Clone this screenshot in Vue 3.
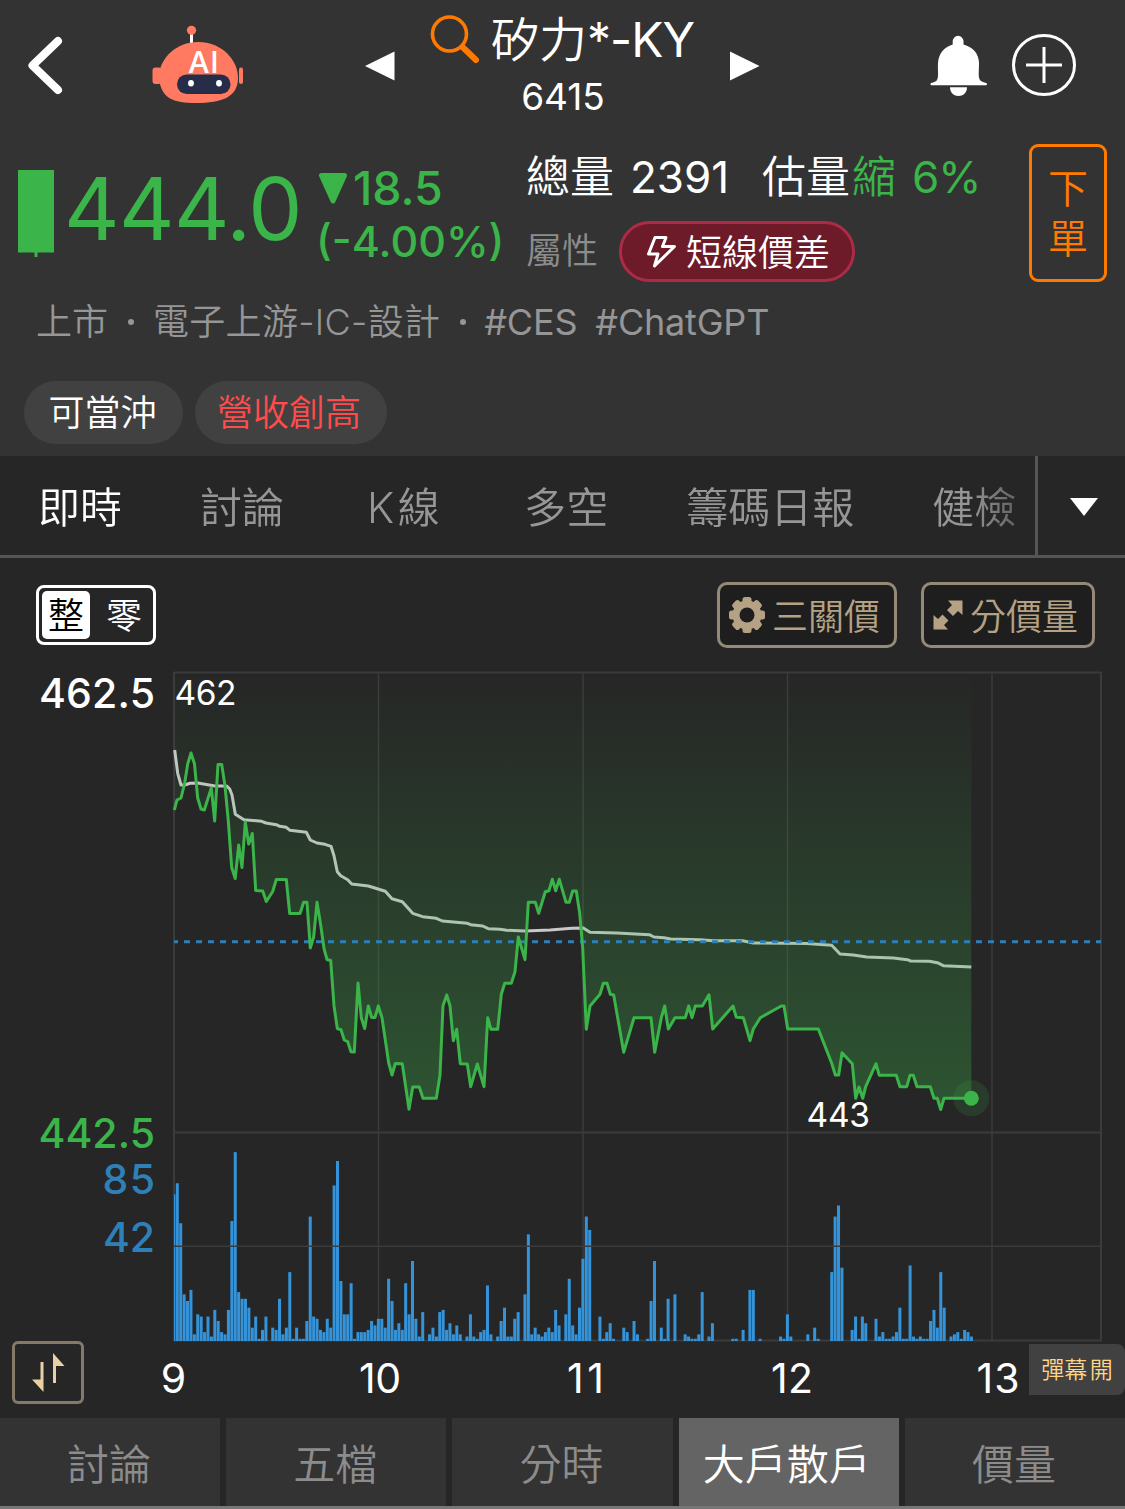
<script setup>
import { ref, computed } from 'vue'

const info = ['上市', '電子上游-IC-設計', '#CES', '#ChatGPT']
const tabs = ['即時', '討論', 'K線', '多空', '籌碼日報', '健檢']
const bottomTabs = ['討論', '五檔', '分時', '大戶散戶', '價量']
const activeTab = ref('即時')
const activeBottom = ref('大戶散戶')
const lot = ref('整')

// chart geometry
const left = 174
const top = 672.5
const base = 1341
const minute = 204.5 / 60
const unit = 2.222
const hours = [
  { label: '9', x: 173.5, w: 23 },
  { label: '10', x: 380, w: 42 },
  { label: '11', x: 585.5, w: 37 },
  { label: '12', x: 792, w: 42 },
  { label: '13', x: 998, w: 43 }
]

// one entry per minute from 09:00
const volumes = [
  66, 71, 53, 21, 18, 23, 3, 12, 11, 4, 11, 2, 14, 9, 4, 3, 14, 54, 85, 22,
  19, 19, 15, 6, 11, 1, 5, 11, 0, 6, 5, 19, 3, 6, 31, 1, 6, 1, 1, 9,
  56, 11, 10, 5, 4, 10, 6, 70, 81, 27, 12, 12, 26, 1, 4, 4, 4, 5, 9, 7,
  10, 10, 6, 28, 18, 5, 8, 5, 26, 12, 36, 10, 2, 13, 0, 3, 6, 2, 13, 14,
  5, 8, 3, 7, 3, 0, 2, 12, 2, 1, 4, 5, 25, 3, 0, 2, 9, 15, 2, 2,
  10, 13, 0, 21, 48, 3, 6, 3, 2, 4, 6, 4, 14, 7, 0, 12, 28, 7, 3, 15,
  37, 56, 50, 0, 0, 11, 1, 4, 8, 1, 0, 0, 6, 4, 0, 9, 3, 0, 0, 1,
  18, 36, 0, 6, 1, 19, 0, 21, 0, 0, 3, 2, 1, 1, 3, 22, 0, 2, 8, 0,
  0, 0, 0, 0, 1, 1, 0, 5, 0, 23, 23, 0, 1, 0, 0, 0, 0, 0, 2, 1,
  12, 2, 0, 0, 0, 0, 3, 0, 6, 1, 0, 0, 0, 31, 56, 61, 33, 0, 0, 5,
  11, 1, 11, 8, 0, 0, 10, 2, 4, 1, 1, 2, 4, 15, 1, 1, 34, 2, 1, 2,
  1, 1, 9, 14, 6, 31, 15, 0, 2, 3, 4, 1, 5, 4, 2
]

const price =
  '174.3,810 177,800 181,798 184.7,783 187.7,764 191,753 194.5,764 197.7,798 201,809 204.3,810 211.3,788 214.7,821 218,764.5 221.7,764.5 225,786 228.3,821 231.7,867.5 235.2,878.5 238.7,845 242,867.5 245.3,822 248.7,844 252.3,833.5 255.7,890.5 262.7,891 266.3,901.5 272.7,891.5 276.3,879.5 286.3,879.5 289.7,913.5 300,913.5 303.7,902.3 307,902.3 310.3,948 313.7,936.7 317,902.3 320.7,925 324,948.5 327,959.5 330.7,960.5 334,1005.7 337.3,1028.5 341,1029.7 344.3,1040 347.7,1041.7 351,1051.7 354.3,1052 358,983 361.3,1017.7 364.7,1028.5 368.3,1006 371.7,1017.5 375,1017.5 378.3,1006 382,1017.7 385.3,1040 388.7,1063 392,1075 395.3,1063.5 402.3,1063.7 409,1109.3 412.7,1087 419.3,1087 423,1098.3 436.3,1098.3 440,1075 443,1005.7 446.7,995 450,1005.7 453.3,1040.7 456.7,1029.3 460.3,1063.7 467.3,1064 470.7,1086.7 477.3,1064 484,1086.7 487.7,1017.7 491,1029.3 497.7,1029.3 501.3,994.3 504.7,983.3 511.3,983.3 515,971.7 518.3,937 525,959.7 528.3,902.3 535.3,902.3 538.7,913.3 545.3,891.7 549,890.7 552.3,879.3 555.7,890.7 559.3,879.3 566,902.3 569.3,902.3 572.7,891 576.3,891 579.7,913.3 582.7,948 586.3,1029.3 590,1006 600,994.3 603.3,983.3 607,983.3 610.3,994.3 613.7,995 623.7,1052.3 634,1017.7 651,1017.7 654.7,1052.3 661.3,1017.7 664.7,1006 668.3,1029 675,1017.7 685.3,1017.7 688.7,1006 692,1017.7 695.3,1006 702.3,1006 709,994.7 712.7,1029 733,1006 736.3,1017.3 743.3,1017.7 750,1040.7 753.3,1029 760.3,1017.7 781.3,1006 784,1006 787.7,1029 818.3,1029 831.7,1063.3 835.3,1075 838.7,1075 842,1052.7 852.3,1063.7 855.7,1098.3 859,1087 862.7,1098.3 865.7,1086.7 876,1063.7 879.3,1075.3 896.3,1075.3 900,1086.7 906.7,1086.7 910,1075.3 913.3,1075.3 917,1086.7 930.3,1086.7 934,1098.3 937.3,1098.3 940.7,1109.5 944,1098.3 971.3,1098.3'
const average =
  '174.7,750 177.7,773.3 181,785 184.7,785 190,783.3 197.7,783 215,786 226.7,786 229.7,789 232,795 235.3,814.3 244,819.7 261.7,821.3 266,823 276.3,824.7 279.7,826.3 286.3,827.3 290,830.3 306.3,832.3 310.3,840 317,843 325,844.3 331,846.3 334,855.7 337.3,871.7 340.7,875.7 347.7,879.7 351.7,884 368.3,886 385.3,891.3 392,898.7 402.3,901.7 412.7,913.3 422.7,916.7 436.3,918.3 442.3,921 467.3,923.3 470.7,924.7 482.7,926 488.3,928.7 500,929.3 506.7,930.3 525,931 550,930 571.7,928.3 583.3,928 590,932.3 616.7,933 649.3,934.7 654,937 664,937.7 670.7,939 700,939.7 713.3,940.7 742.7,940.7 753.3,943 806.7,943.5 831.7,945.3 840,954 853.3,955 866.7,957 893.3,958 907.3,959.7 910.7,961 929.3,961.3 937.3,962.7 943.3,965.7 971.3,967'

const area = computed(() => `${left},${top} ${price} 971.3,${top}`)
const bars = computed(() =>
  volumes
    .map((v, i) => {
      const start = Math.max(left, left + i * minute - 1.6)
      return { x: start, w: left + i * minute + 1.4 - start, h: v * unit }
    })
    .filter((bar) => bar.h > 0)
)
</script>

<template>
  <div class="app">
    <header class="header">
      <svg class="back" viewBox="24 35 40 60" width="40" height="60">
        <path d="M57 41 31.500 65.500 57 90" fill="none" stroke="#fff" stroke-width="8" stroke-linecap="round" stroke-linejoin="round" />
      </svg>
      <svg class="robot" viewBox="150 22 96 86" width="96" height="86">
        <path d="M191.500 34V45" stroke="#fff" stroke-width="3" />
        <circle cx="191.500" cy="30.300" r="4.600" fill="#ff7a60" />
        <rect x="152.500" y="67.500" width="9" height="16.500" rx="3" fill="#ff7a60" />
        <rect x="239" y="67.500" width="4" height="16.500" rx="2" fill="#ff7a60" />
        <path d="M198 42C222 42 238 60 238 78C238 97 222 103 196 103C174 103 159 99 159 74C161 58 176 42 198 42Z" fill="#ff7a60" />
        <rect x="177" y="74.500" width="53.500" height="19.500" rx="9.750" fill="#262d48" />
        <ellipse cx="191" cy="83.300" rx="2.900" ry="3.300" fill="#fff" />
        <ellipse cx="219" cy="83.300" rx="2.900" ry="3.300" fill="#fff" />
        <text x="203.500" y="73" class="robot-label">AI</text>
      </svg>
      <svg class="prev" viewBox="0 0 30 30" width="30" height="30"><path d="M0 15 29.500 0.500V29.500Z" fill="#fff" /></svg>
      <div class="title">
        <div class="name">
          <svg viewBox="429 12 52 52" width="52" height="52">
            <circle cx="449.500" cy="34" r="17" fill="none" stroke="#ff7a00" stroke-width="3.600" />
            <path d="M463 47.500 476 60" stroke="#ff7a00" stroke-width="6" stroke-linecap="round" />
          </svg>
          <span>矽力<b>*-KY</b></span>
        </div>
        <div class="code">6415</div>
      </div>
      <svg class="next" viewBox="0 0 30 30" width="30" height="30"><path d="M0 0.500 29.500 15 0 29.500Z" fill="#fff" /></svg>
      <svg class="bell" viewBox="929 34 60 64" width="60" height="64">
        <path d="M952.700 42a5.400 6.200 0 0 1 10.800 0v2.500C973 47 979 54 979 63C979 72 978 77 980 80C982 83 987 82 987 84.300Q987 85.200 986 85.200H931.500Q930.500 85.200 930.500 84.300C930.500 82 935.500 83 937 80C939 76 937.500 71 938 63C938.500 54 944 47 952.700 44.500Z" fill="#fff" />
        <path d="M950 87.300H967C967 93 963 96 958.500 96C954 96 950 93 950 87.300Z" fill="#fff" />
      </svg>
      <svg class="add" viewBox="1010 32 68 66" width="68" height="66">
        <ellipse cx="1044" cy="65" rx="30.500" ry="29.500" fill="none" stroke="#fff" stroke-width="3" />
        <path d="M1044 47V83M1026 65H1062" stroke="#fff" stroke-width="3" />
      </svg>
    </header>

    <section class="quote">
      <svg class="candle" viewBox="0 0 36 87" width="36" height="87">
        <path d="M0 0H36V82.500H19.500V87H16.500V82.500H0Z" fill="#3bb44a" />
      </svg>
      <div class="price">444.0</div>
      <div class="change">
        <div class="diff">
          <svg viewBox="0 0 32 32" width="32" height="32">
            <path d="M3.500 3.500H26.500L15 29Z" fill="#3bb44a" stroke="#3bb44a" stroke-width="5" stroke-linejoin="round" />
          </svg>
          <span>18.5</span>
        </div>
        <div class="percent">(-4.00%)</div>
      </div>
      <div class="stats">
        <div class="volume">
          <span>總量</span>
          <span class="total">2391</span>
          <span class="estimate">估量</span>
          <span class="shrink">縮</span>
          <span class="rate">6%</span>
        </div>
        <div class="attr">
          <span class="attr-label">屬性</span>
          <span class="pill">
            <svg viewBox="646 234 32 35" width="32" height="35">
              <path d="M655 237.500H666L662.500 246.500H674.500L654.500 266L658 254H648.500Z" fill="none" stroke="#fff" stroke-width="3" stroke-linejoin="round" />
            </svg>
            <span>短線價差</span>
          </span>
        </div>
      </div>
      <button class="order"><span>下</span><span>單</span></button>
    </section>

    <div class="info">
      <span>{{ info[0] }}</span>
      <i></i>
      <span class="industry">{{ info[1] }}</span>
      <i></i>
      <span class="hash">{{ info[2] }}</span>
      <span class="hash topic">{{ info[3] }}</span>
    </div>

    <div class="tags">
      <span class="tag">可當沖</span>
      <span class="tag hot">營收創高</span>
    </div>

    <nav class="tabs">
      <div class="tab-list">
        <a v-for="tab in tabs" :key="tab" :class="{ active: tab === activeTab, k: tab === 'K線' }" @click="activeTab = tab">{{ tab }}</a>
      </div>
      <button class="more">
        <svg viewBox="0 0 28 18" width="28" height="18"><path d="M0 0H28L14 18Z" fill="#fff" /></svg>
      </button>
    </nav>

    <div class="toolbar">
      <div class="toggle">
        <span v-for="name in ['整', '零']" :key="name" :class="{ on: name === lot }" @click="lot = name">{{ name }}</span>
      </div>
      <button class="tool levels">
        <svg viewBox="-18 -18 36 36" width="36" height="36">
          <g fill="#b5a184">
            <rect v-for="n in 4" :key="n" x="-4.500" y="-18" width="9" height="36" rx="2.500" :transform="`rotate(${n * 45})`" />
          </g>
          <circle r="11" fill="none" stroke="#b5a184" stroke-width="7" />
          <circle r="7.500" fill="#1e1e1e" />
        </svg>
        <span>三關價</span>
      </button>
      <button class="tool">
        <svg viewBox="0 0 30 30" width="30" height="30">
          <path d="M15 0.500H29.500V15L25 11L20 16L14 10L19 5ZM0.500 15L5 19L9.500 14.500L15.500 20.500L11 25L15 29.500H0.500Z" fill="#b5a184" />
        </svg>
        <span>分價量</span>
      </button>
    </div>

    <section class="chart">
      <svg viewBox="0 660 1125 758" width="1125" height="758">
        <defs>
          <linearGradient id="fade" gradientUnits="userSpaceOnUse" x1="0" y1="672" x2="0" y2="1110">
            <stop offset="0" stop-color="#3bb44a" stop-opacity="0" />
            <stop offset="1" stop-color="#3bb44a" stop-opacity="0.330" />
          </linearGradient>
        </defs>
        <g class="grid">
          <path d="M378.500 672V1341M583 672V1341M787.500 672V1341M992 672V1341" stroke-width="1.500" />
          <path d="M174 672.500H1102M174 1132.500H1102" stroke-width="1.800" />
          <path d="M174 672V1341M1101 672V1341M174 1340.500H1102" stroke-width="2" />
        </g>
        <polyline :points="average" fill="none" stroke="#c8c8c8" stroke-width="3" stroke-linejoin="round" />
        <polygon :points="area" fill="url(#fade)" />
        <path d="M174 941.700H1101" stroke="#2e80b8" stroke-width="3" stroke-dasharray="6 6" stroke-dashoffset="2" />
        <polyline :points="price" fill="none" stroke="#3bb44a" stroke-width="3" stroke-linejoin="round" />
        <circle cx="971.300" cy="1098.300" r="18" fill="#3bb44a" opacity="0.150" />
        <circle cx="971.300" cy="1098.300" r="7.500" fill="#3bb44a" />
        <g fill="#3594d9">
          <rect v-for="(bar, i) in bars" :key="i" :x="bar.x" :y="base - bar.h" :width="bar.w" :height="bar.h" />
        </g>
        <path class="grid" d="M174 1246.300H1101" stroke-width="1.500" />
        <g class="mark">
          <text x="174.500" y="704.500" textLength="62">462</text>
          <text x="806.500" y="1126.500" textLength="63.500">443</text>
        </g>
        <g class="axis">
          <text x="39" y="708" textLength="116" class="high">462.5</text>
          <text x="38.500" y="1148" textLength="116.500" class="low">442.5</text>
          <text x="102.500" y="1193.500" textLength="52.500">85</text>
          <text x="103" y="1252" textLength="52">42</text>
        </g>
        <text v-for="hour in hours" :key="hour.label" class="hour" :x="hour.x" y="1393" :textLength="hour.w">{{ hour.label }}</text>
      </svg>
      <button class="sort">
        <svg viewBox="30 1352 38 42" width="38" height="42">
          <path d="M54 1383V1353L65.500 1366H57V1383ZM44.500 1362V1392L33 1379.500H41.500V1362Z" fill="#e9cfa4" />
        </svg>
      </button>
      <button class="danmu">彈幕 開</button>
    </section>

    <nav class="bottom">
      <a v-for="tab in bottomTabs" :key="tab" :class="{ active: tab === activeBottom }" @click="activeBottom = tab">{{ tab }}</a>
    </nav>
  </div>
</template>

<style>
body {
  margin: 0;
  background: #262626;
}
</style>

<style scoped>
.app {
  width: 1125px;
  height: 1509px;
  overflow: hidden;
  background: #333;
  color: #fff;
  font-family: Inter, 'Noto Sans CJK TC', sans-serif;
  font-weight: 350;
}
.app * {
  box-sizing: border-box;
}
svg {
  display: block;
  flex: none;
}
button {
  margin: 0;
  padding: 0;
  border: 0;
  background: none;
  color: inherit;
  font: inherit;
}
span,
a {
  white-space: nowrap;
}

.header {
  display: flex;
  align-items: center;
  height: 130px;
}
.back {
  margin-left: 25px;
}
.robot {
  margin-left: 85px;
}
.robot-label {
  fill: #fff;
  font-size: 30.5px;
  font-weight: 500;
  letter-spacing: 0.5px;
  text-anchor: middle;
}
.prev {
  margin: 2px 0 0 119px;
}
.title {
  width: 300px;
  height: 130px;
  margin-left: 18px;
  padding-top: 12px;
}
.name {
  display: flex;
  gap: 10px;
  padding-left: 16px;
  font-size: 48px;
  line-height: 55px;
}
.name b {
  font-weight: 400;
  letter-spacing: -1px;
}
.code {
  margin-top: 8px;
  font-size: 37px;
  font-weight: 400;
  line-height: 44px;
  text-align: center;
}
.next {
  margin: 2px 0 0 17px;
}
.bell {
  margin: 2px 0 0 169px;
}
.add {
  margin-left: 21px;
}

.quote {
  display: flex;
  height: 170px;
}
.candle {
  margin: 40px 0 0 18px;
}
.price {
  width: 252px;
  margin-left: 10px;
  font-size: 86px;
  font-weight: 400;
  line-height: 158px;
  letter-spacing: -0.5px;
  color: #3bb44a;
}
.change {
  width: 210px;
  padding-top: 30px;
  color: #3bb44a;
  font-size: 46.5px;
  font-weight: 500;
}
.diff {
  display: flex;
  gap: 3px;
  height: 56px;
  padding-left: 2px;
  line-height: 56px;
}
.diff svg {
  margin-top: 12px;
}
.percent {
  font-size: 43px;
  line-height: 51px;
}
.stats {
  width: 503px;
  padding-top: 19px;
}
.volume {
  display: flex;
  font-size: 44px;
  line-height: 56px;
}
.total {
  width: 148px;
  padding-left: 16px;
  font-weight: 400;
}
.shrink,
.rate {
  color: #3bb44a;
}
.shrink {
  padding-left: 2px;
}
.rate {
  padding-left: 16px;
  font-weight: 400;
  letter-spacing: -1px;
}
.attr {
  display: flex;
  align-items: center;
  height: 61px;
  margin-top: 16px;
  font-size: 36px;
  line-height: 57px;
}
.attr-label {
  width: 93px;
  color: #8c8c8c;
}
.pill {
  display: flex;
  align-items: center;
  gap: 8px;
  width: 236px;
  height: 61px;
  padding-left: 24px;
  border: 3px solid #ad2b47;
  border-radius: 31px;
  background: #6d1a29;
}
.pill span {
  padding-top: 3px;
}
.order {
  display: flex;
  flex-direction: column;
  align-items: center;
  width: 78px;
  height: 138px;
  margin-top: 14px;
  padding-top: 17px;
  border: 3px solid #ff7a00;
  border-radius: 9px;
  color: #ff7a00;
  font-size: 40px;
  line-height: 50px;
}

.info {
  display: flex;
  align-items: center;
  height: 44px;
  padding-left: 36px;
  font-size: 36px;
  line-height: 44px;
  color: #969696;
}
.info i {
  width: 6px;
  height: 6px;
  margin: 0 19px 0 20px;
  border-radius: 50%;
  background: #969696;
}
.industry {
  letter-spacing: 0.3px;
}
.hash {
  margin-left: -1px;
  font-weight: 400;
  letter-spacing: -0.2px;
}
.topic {
  margin-left: 18px;
}
.tags {
  display: flex;
  gap: 12px;
  height: 112px;
  padding: 37px 24px 0;
}
.tag {
  width: 159px;
  height: 63px;
  padding-right: 2px;
  border-radius: 32px;
  background: #414141;
  font-size: 36px;
  line-height: 65px;
  text-align: center;
}
.hot {
  width: 192px;
  padding-right: 4px;
  color: #ff4b4b;
}

.tabs {
  display: flex;
  height: 102px;
  border-bottom: 3px solid #555;
  background: #262626;
}
.tab-list {
  display: flex;
  gap: 78px;
  width: 1035px;
  padding-left: 38px;
  overflow: hidden;
  color: #969696;
  font-size: 42px;
  line-height: 104px;
  mask-image: linear-gradient(90deg, #000 970px, rgba(0, 0, 0, 0.4) 1030px);
}
.tab-list .active {
  color: #fff;
}
.tab-list .k {
  margin: 0 3px 0 5px;
  letter-spacing: 3.5px;
}
.more {
  display: flex;
  flex: 1;
  align-items: center;
  justify-content: center;
  padding: 3px 0 0 4px;
  border-left: 3px solid #555;
}

.toolbar {
  display: flex;
  height: 102px;
  padding: 24px 30px 0 36px;
  background: #262626;
}
.toggle {
  display: flex;
  gap: 10px;
  width: 120px;
  height: 60px;
  margin: 3px auto 0 0;
  padding: 3px;
  border: 3px solid #fff;
  border-radius: 8px;
  font-size: 36px;
  line-height: 51px;
}
.toggle span {
  width: 48px;
  height: 48px;
  text-align: center;
}
.toggle .on {
  border-radius: 5px;
  background: #fff;
  color: #000;
}
.tool {
  display: flex;
  align-items: center;
  gap: 7px;
  width: 174px;
  height: 66px;
  padding-left: 9px;
  border: 3px solid #948a78;
  border-radius: 10px;
  background: #1e1e1e;
  color: #b5a184;
  font-size: 36px;
  line-height: 56px;
}
.tool span {
  padding-top: 3px;
}
.levels {
  width: 180px;
  margin-right: 24px;
}

.chart {
  position: relative;
  height: 758px;
  background: #262626;
}
.grid {
  fill: none;
  stroke: #3b3b3b;
}
.mark {
  fill: #fff;
  font-size: 33.5px;
  font-weight: 400;
}
.axis {
  fill: #2e80b8;
  font-size: 41px;
  font-weight: 500;
}
.high {
  fill: #fff;
}
.low {
  fill: #3bb44a;
}
.hour {
  fill: #fff;
  font-size: 41px;
  font-weight: 400;
  text-anchor: middle;
}
.sort {
  position: absolute;
  top: 681px;
  left: 12px;
  display: flex;
  align-items: center;
  justify-content: center;
  width: 72px;
  height: 63px;
  border: 3px solid #85796a;
  border-radius: 6px;
}
.danmu {
  position: absolute;
  top: 684px;
  right: 0;
  width: 96px;
  height: 51px;
  border-radius: 0 8px 8px 0;
  background: #414141;
  color: #ffd485;
  font-size: 23px;
  line-height: 53px;
  white-space: nowrap;
  word-spacing: -4px;
}

.bottom {
  display: grid;
  grid-template-columns: repeat(5, 1fr);
  grid-template-rows: 88px;
  gap: 6px;
  height: 91px;
  border-bottom: 3px solid #777;
  background: #262626;
}
.bottom a {
  padding: 5px 2px 0 0;
  background: #333;
  color: #8c8c8c;
  font-size: 42px;
  line-height: 83px;
  text-align: center;
}
.bottom .active {
  padding-right: 4px;
  background: #646464;
  color: #fff;
}
</style>
